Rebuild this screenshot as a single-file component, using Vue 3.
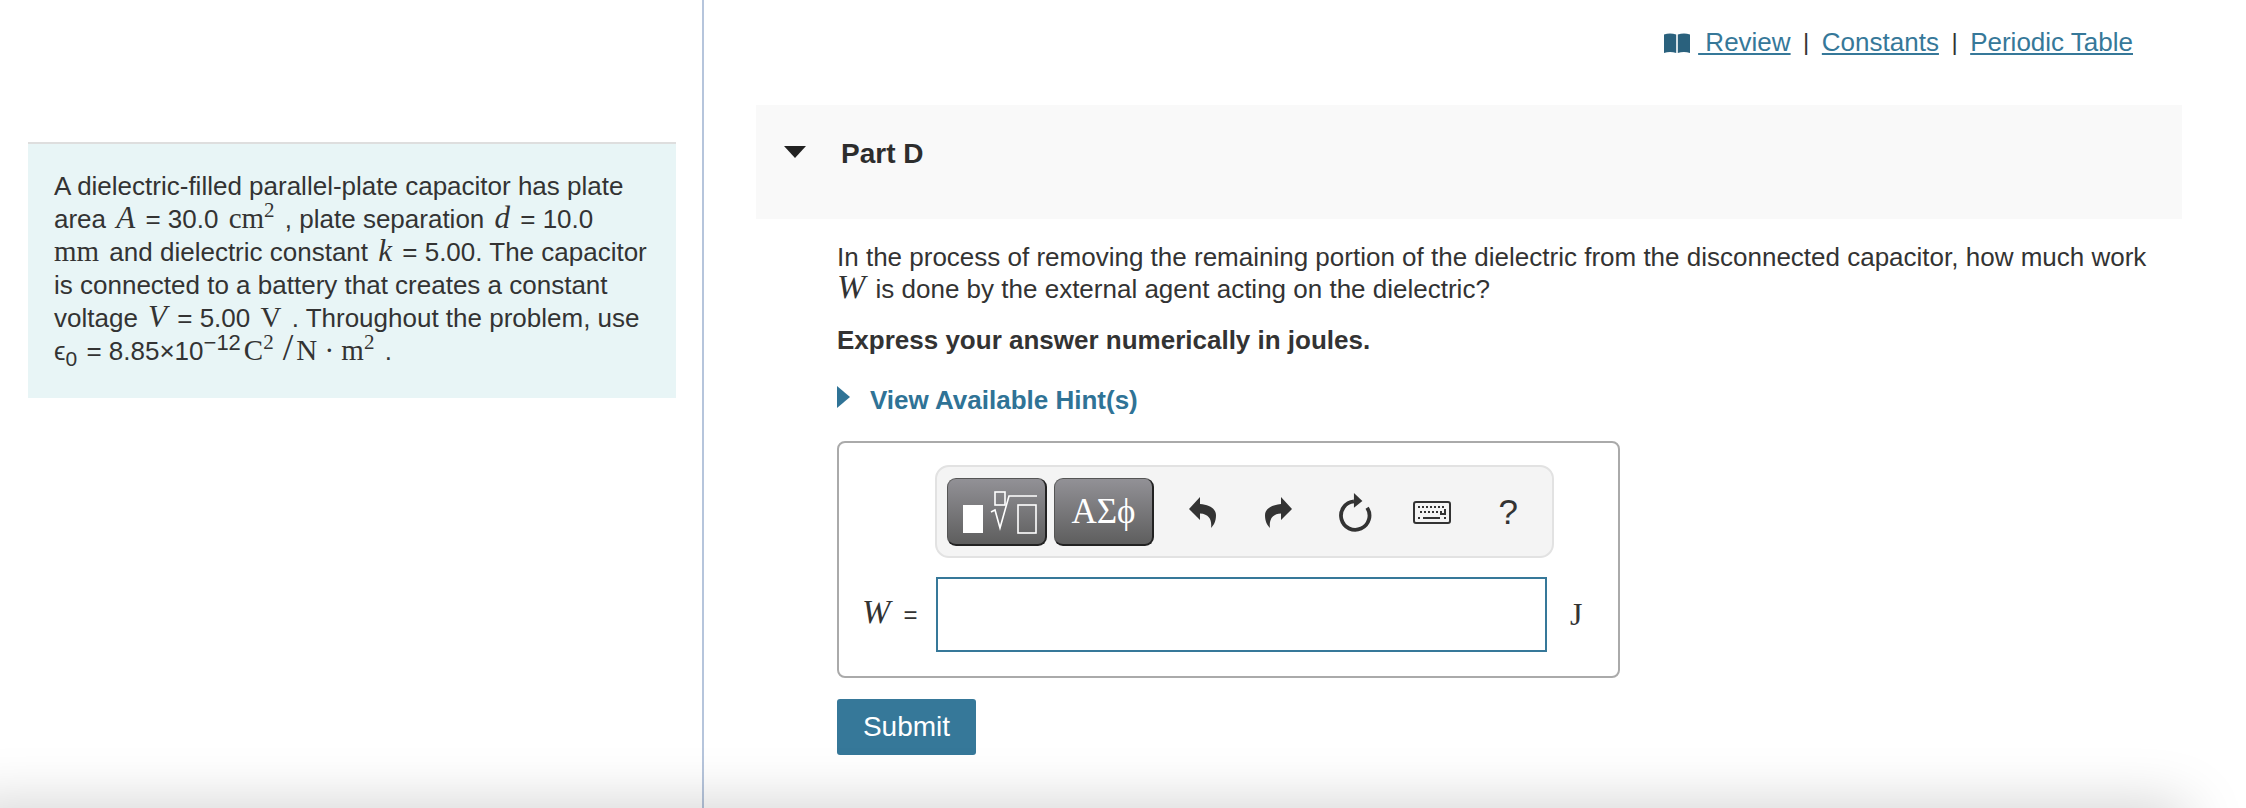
<template>
  <div class="page">
    <aside class="left">
      <div class="intro">
        A dielectric-filled parallel-plate capacitor has plate<br />
        area <i class="m">A</i> = 30.0 <span class="m-r">cm<sup>2</sup></span> , plate separation <i class="m">d</i> = 10.0<br />
        <span class="m-r first">mm</span> and dielectric constant <i class="m">k</i> = 5.00. The capacitor<br />
        is connected to a battery that creates a constant<br />
        voltage <i class="m">V</i> = 5.00 <span class="m-r">V</span> . Throughout the problem, use<br />
        <span class="eps">ϵ<sub>0</sub></span> = 8.85×10<sup class="exp">−12</sup>
        <span class="m-r">C<sup>2</sup></span><span class="slash">/</span><span class="m-r">N · m<sup>2</sup></span> .
      </div>
    </aside>

    <main class="right">
      <nav class="links">
        <svg class="book" viewBox="0 0 26 20" width="26" height="20">
          <path d="M0 1.5C4 0 8 0 12.2 1.5V20C8 18.6 4 18.6 0 20Z" fill="#2a617d" />
          <path d="M26 1.5C22 0 18 0 13.8 1.5V20C18 18.6 22 18.6 26 20Z" fill="#2a617d" />
        </svg>
        <a class="link">&nbsp;Review</a>
        <span class="sep">|</span>
        <a class="link">Constants</a>
        <span class="sep">|</span>
        <a class="link">Periodic Table</a>
      </nav>

      <header class="part-head">
        <span class="caret-down"></span>
        <h2>Part D</h2>
      </header>

      <section class="part-body">
        <p class="question">
          In the process of removing the remaining portion of the dielectric from the disconnected capacitor, how much work<br />
          <i class="m big first">W</i> is done by the external agent acting on the dielectric?
        </p>
        <p class="express">Express your answer numerically in joules.</p>
        <div class="hint">
          <span class="caret-right"></span>
          <span>View Available Hint(s)</span>
        </div>

        <div class="answer">
          <div class="toolbar">
            <button class="tool">
              <svg viewBox="0 0 98 67" width="98" height="67">
                <rect x="15" y="26" width="20" height="28" fill="#fff" />
                <g fill="none" stroke="#fff" stroke-width="1.6">
                  <rect x="47" y="13" width="10" height="13" />
                  <path d="M43 33L47 31L52 49L61 17H89" />
                  <rect x="70" y="26" width="18" height="28" />
                </g>
              </svg>
            </button>
            <button class="tool greek">ΑΣϕ</button>
            <span class="ico">
              <svg viewBox="0 0 27 31" width="27" height="31">
                <path d="M0 12L11 0V7C21 8 27 12 27 18C27 24 25 28 22 31C23 24 21 17 11 16.5V23Z" fill="#333" />
              </svg>
            </span>
            <span class="ico">
              <svg viewBox="0 0 27 31" width="27" height="31">
                <path d="M27 12L16 0V7C6 8 0 12 0 18C0 24 2 28 5 31C4 24 6 17 16 16.5V23Z" fill="#333" />
              </svg>
            </span>
            <span class="ico">
              <svg viewBox="0 0 32 37" width="34" height="39">
                <path d="M15 8A13.5 13.5 0 1 0 27.5 14" fill="none" stroke="#333" stroke-width="3.6" />
                <path d="M15 0L23 7.5L15 14Z" fill="#333" />
              </svg>
            </span>
            <span class="ico">
              <svg viewBox="0 0 38 23" width="38" height="23">
                <rect x="1" y="1" width="36" height="21" rx="2" fill="none" stroke="#333" stroke-width="2" />
                <g fill="#333">
                  <rect v-for="k in keyDots" :key="k.x + '-' + k.y" :x="k.x" :y="k.y" width="2" height="2" />
                  <rect x="10" y="16" width="17" height="2" />
                  <rect x="31" y="8" width="2" height="6" />
                  <rect x="27" y="12" width="5" height="2" />
                </g>
              </svg>
            </span>
            <span class="ico help">?</span>
          </div>
          <div class="answer-row">
            <span class="label"><i class="m big first">W</i> <span class="eq">=</span></span>
            <input class="input" type="text" />
            <span class="unit">J</span>
          </div>
        </div>

        <button class="submit">Submit</button>
      </section>
    </main>

    <div class="shade"></div>
  </div>
</template>

<script setup>
// little squares on the keyboard icon
const keyDots = []
for (let i = 0; i < 7; i++) keyDots.push({ x: 5 + i * 4, y: 5 })
for (let i = 0; i < 6; i++) keyDots.push({ x: 7 + i * 4, y: 10 })
keyDots.push({ x: 5, y: 16 }, { x: 31, y: 16 })
</script>

<style>
html, body {
  margin: 0;
  background: #fff;
}
</style>

<style scoped>
.page {
  position: relative;
  display: flex;
  height: 808px;
  overflow: hidden;
  font-family: "Liberation Sans", Arial, sans-serif;
  font-size: 26px;
  color: #333;
}
.left {
  width: 704px;
  flex-shrink: 0;
  box-sizing: border-box;
  padding: 142px 26px 0 28px;
  border-right: 2px solid #b6c5dc;
}
.intro {
  box-sizing: border-box;
  height: 256px;
  padding: 26px 0 0 26px;
  background: #e8f5f6;
  border-top: 2px solid #dedede;
  line-height: 33px;
  white-space: nowrap;
}
.m {
  font-family: "Liberation Serif", serif;
  font-size: 31px;
  line-height: 0;
  margin: 0 3px;
}
.m.big {
  font-size: 34px;
}
.m-r {
  font-family: "Liberation Serif", serif;
  font-size: 29px;
  line-height: 0;
  margin: 0 3px;
}
.first {
  margin-left: 0;
}
.slash {
  font-family: "Liberation Serif", serif;
  font-size: 38px;
  line-height: 0;
  margin: 0 0 0 6px;
}
sup, sub {
  font-size: 21px;
  line-height: 0;
}
.exp {
  font-family: "Liberation Sans", sans-serif;
  font-size: 22px;
}
.eps {
  line-height: 0;
  margin-right: 2px;
}
.right {
  flex: 1;
  min-width: 0;
  padding: 0 64px 0 52px;
}
.links {
  height: 105px;
  box-sizing: border-box;
  padding: 26px 49px 0 0;
  display: flex;
  justify-content: flex-end;
  align-items: flex-start;
  line-height: 32px;
}
.book {
  margin: 7px 8px 0 0;
}
.link {
  color: #367899;
  text-decoration: underline;
}
.sep {
  margin: 0 12.5px;
  color: #333;
  font-size: 24px;
}
.part-head {
  height: 114px;
  background: #f9f9f9;
  display: flex;
  align-items: flex-start;
  padding: 33px 0 0 28px;
  box-sizing: border-box;
}
.part-head h2 {
  margin: 0 0 0 35px;
  font-size: 28px;
  line-height: 32px;
  font-weight: 700;
  color: #2d2d2d;
}
.caret-down {
  width: 0;
  height: 0;
  margin-top: 8px;
  border-left: 11px solid transparent;
  border-right: 11px solid transparent;
  border-top: 12px solid #222;
}
.part-body {
  padding: 22px 0 0 81px;
}
.question {
  margin: 0;
  line-height: 32px;
}
.express {
  margin: 19px 0 0;
  font-weight: 700;
  line-height: 32px;
}
.hint {
  margin-top: 28px;
  display: flex;
  align-items: flex-start;
  color: #2f7396;
  font-weight: 700;
  line-height: 32px;
}
.caret-right {
  width: 0;
  height: 0;
  margin: 2px 20px 0 0;
  border-top: 11px solid transparent;
  border-bottom: 11px solid transparent;
  border-left: 13px solid #2f7396;
}
.answer {
  box-sizing: border-box;
  width: 783px;
  height: 237px;
  margin-top: 25px;
  padding: 22px 0 0 96px;
  border: 2px solid #aaa;
  border-radius: 8px;
}
.toolbar {
  box-sizing: border-box;
  width: 619px;
  height: 93px;
  padding: 11px 0 0 10px;
  display: flex;
  align-items: flex-start;
  background: #f4f4f4;
  border: 2px solid #e2e2e2;
  border-radius: 14px;
}
.tool {
  box-sizing: border-box;
  width: 100px;
  height: 68px;
  margin: 0 7px 0 0;
  padding: 0;
  border: 1px solid #555;
  border-right: 2px solid #222;
  border-bottom: 2px solid #222;
  border-radius: 9px;
  background: linear-gradient(#929196, #5e5e5e);
  color: #fff;
}
.tool.greek {
  margin-right: 10px;
}
.tool svg {
  display: block;
}
.greek {
  font-family: "Liberation Serif", serif;
  font-size: 35px;
}
.ico {
  width: 76.5px;
  height: 68px;
  flex-shrink: 0;
  display: flex;
  align-items: center;
  justify-content: center;
}
.help {
  font-size: 35px;
  color: #333;
}
.answer-row {
  display: flex;
  align-items: center;
  height: 75px;
  margin: 19px 0 0 -96px;
}
.label {
  width: 97px;
  box-sizing: border-box;
  padding-left: 23px;
  white-space: nowrap;
}
.eq {
  font-size: 24px;
  margin-left: 3px;
}
.input {
  box-sizing: border-box;
  width: 611px;
  height: 75px;
  padding: 0;
  border: 2px solid #367899;
  background: #fff;
  outline: none;
}
.unit {
  margin-left: 23px;
  font-family: "Liberation Serif", serif;
  font-size: 32px;
}
.submit {
  display: block;
  box-sizing: border-box;
  width: 139px;
  height: 56px;
  margin-top: 21px;
  padding: 0;
  border: none;
  border-radius: 3px;
  background: #367899;
  color: #fff;
  font-family: inherit;
  font-size: 28px;
}
.shade {
  position: absolute;
  left: -40px;
  right: 60px;
  bottom: -50px;
  height: 50px;
  box-shadow: 0 0 60px rgba(0, 0, 0, 0.21);
  pointer-events: none;
}
</style>
